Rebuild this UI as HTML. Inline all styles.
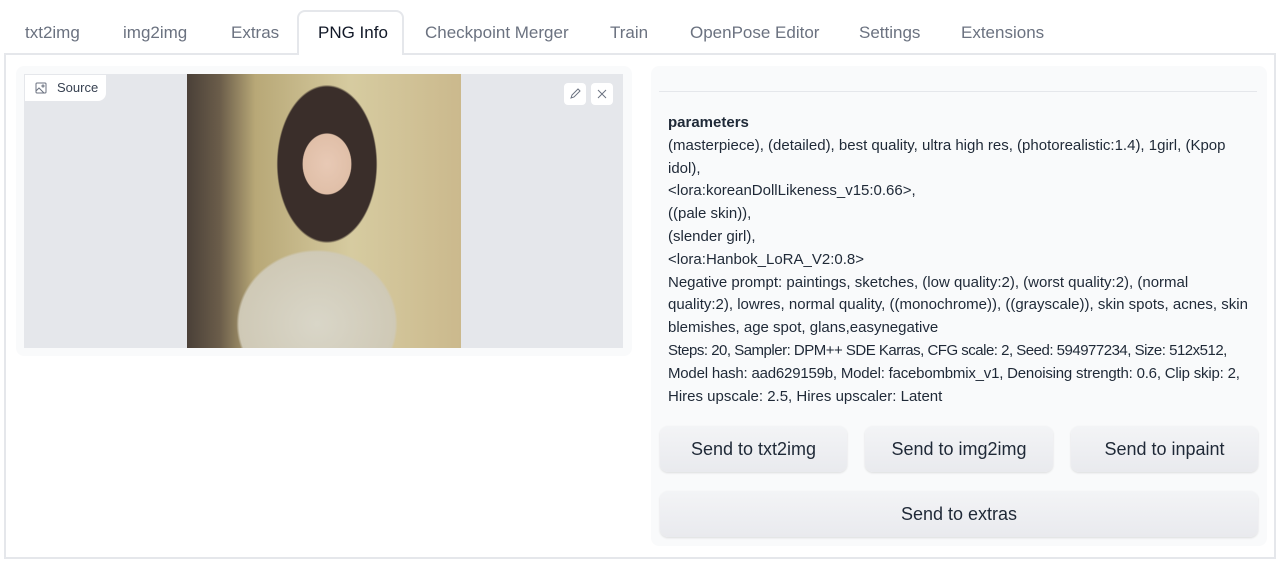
<!DOCTYPE html>
<html><head><style>
*{box-sizing:border-box;margin:0;padding:0}
body{width:1280px;height:573px;background:#fff;font-family:"Liberation Sans",sans-serif;position:relative;overflow:hidden;color:#1f2937}
.tab{position:absolute;top:23px;font-size:17px;color:#6b7280;letter-spacing:0}
.active{position:absolute;left:297px;top:10px;width:107px;height:45px;border:2px solid #e5e7eb;border-bottom:none;border-radius:8px 8px 0 0;background:#fff;z-index:2}
.frame{position:absolute;left:4px;top:53px;width:1272px;height:506px;border:2px solid #e5e7eb}
.lp{position:absolute;left:16px;top:66px;width:616px;height:290px;background:#f9fafb;border-radius:8px}
.img{position:absolute;left:24px;top:74px;width:599px;height:274px;background:#e5e7eb}
.pic{position:absolute;left:187px;top:74px;width:274px;height:274px;background:
radial-gradient(ellipse 40px 50px at 140px 90px,#e8c9b5 0,#e0bfa8 60%,transparent 62%),
radial-gradient(ellipse 70px 110px at 140px 90px,#3a2e2a 0,#3a2e2a 70%,transparent 72%),
radial-gradient(ellipse 130px 120px at 130px 250px,#d9d6c8 0,#cfc9b6 60%,transparent 62%),
linear-gradient(90deg,#4a4038 0,#6b5d4a 12%,#b8a877 25%,#d6cba0 60%,#cbb98d 100%)}
.src{position:absolute;left:25px;top:75px;width:81px;height:26px;background:#fff;border-radius:0 0 8px 0;font-size:13px;color:#374151;padding:5px 0 0 32px}
.ib{position:absolute;top:83px;width:22px;height:22px;background:#fff;border-radius:4px;font-size:13px;color:#6b7280;text-align:center;line-height:22px}
.rp{position:absolute;left:651px;top:66px;width:616px;height:480px;background:#f9fafb;border-radius:8px}
.hr{position:absolute;left:659px;top:91px;width:598px;border-top:1px solid #e5e7eb}
.txt{position:absolute;left:668px;top:112px;font-size:15px;line-height:22.8px;color:#1f2937;white-space:nowrap;letter-spacing:0}
.btn{position:absolute;height:46px;border-radius:8px;background:linear-gradient(#f3f4f6,#e9eaee);box-shadow:0 1px 2px rgba(0,0,0,.12);font-size:18px;color:#1f2937;text-align:center;line-height:46px}
</style></head><body>
<div class="frame"></div>
<div class="active"></div>
<div class="tab" style="left:25px">txt2img</div>
<div class="tab" style="left:123px">img2img</div>
<div class="tab" style="left:231px">Extras</div>
<div class="tab" style="left:318px;color:#111827;z-index:3">PNG Info</div>
<div class="tab" style="left:425px">Checkpoint Merger</div>
<div class="tab" style="left:610px">Train</div>
<div class="tab" style="left:690px">OpenPose Editor</div>
<div class="tab" style="left:859px">Settings</div>
<div class="tab" style="left:961px">Extensions</div>
<div class="lp"></div>
<div class="img"></div>
<div class="pic"></div>
<div class="src"><svg style="position:absolute;left:10px;top:7px" width="12" height="12" viewBox="0 0 12 12" fill="none" stroke="#6b7280"><rect x="1" y="1" width="10" height="10" rx="1"/><path d="M1 9l3-3 5 5"/><circle cx="8" cy="4" r="1"/></svg>Source</div>
<div class="ib" style="left:564px"><svg width="12" height="12" viewBox="0 0 12 12" fill="none" stroke="#6b7280" style="margin-top:5px"><path d="M2 10l1-3 6-6 2 2-6 6z"/></svg></div>
<div class="ib" style="left:591px"><svg width="12" height="12" viewBox="0 0 12 12" stroke="#6b7280" style="margin-top:5px"><path d="M2 2l8 8M10 2l-8 8"/></svg></div>
<div class="rp"></div>
<div class="hr"></div>
<div class="txt"><b>parameters</b><br>(masterpiece), (detailed), best quality, ultra high res, (photorealistic:1.4), 1girl, (Kpop<br>idol),<br>&lt;lora:koreanDollLikeness_v15:0.66&gt;,<br>((pale skin)),<br>(slender girl),<br>&lt;lora:Hanbok_LoRA_V2:0.8&gt;<br>Negative prompt: paintings, sketches, (low quality:2), (worst quality:2), (normal<br>quality:2), lowres, normal quality, ((monochrome)), ((grayscale)), skin spots, acnes, skin<br>blemishes, age spot, glans,easynegative<br><span style="letter-spacing:-0.5px">Steps: 20, Sampler: DPM++ SDE Karras, CFG scale: 2, Seed: 594977234, Size: 512x512,</span><br><span style="letter-spacing:-0.2px">Model hash: aad629159b, Model: facebombmix_v1, Denoising strength: 0.6, Clip skip: 2,</span><br>Hires upscale: 2.5, Hires upscaler: Latent</div>
<div class="btn" style="left:660px;top:426px;width:187px">Send to txt2img</div>
<div class="btn" style="left:865px;top:426px;width:188px">Send to img2img</div>
<div class="btn" style="left:1071px;top:426px;width:187px">Send to inpaint</div>
<div class="btn" style="left:660px;top:491px;width:598px">Send to extras</div>
</body></html>
